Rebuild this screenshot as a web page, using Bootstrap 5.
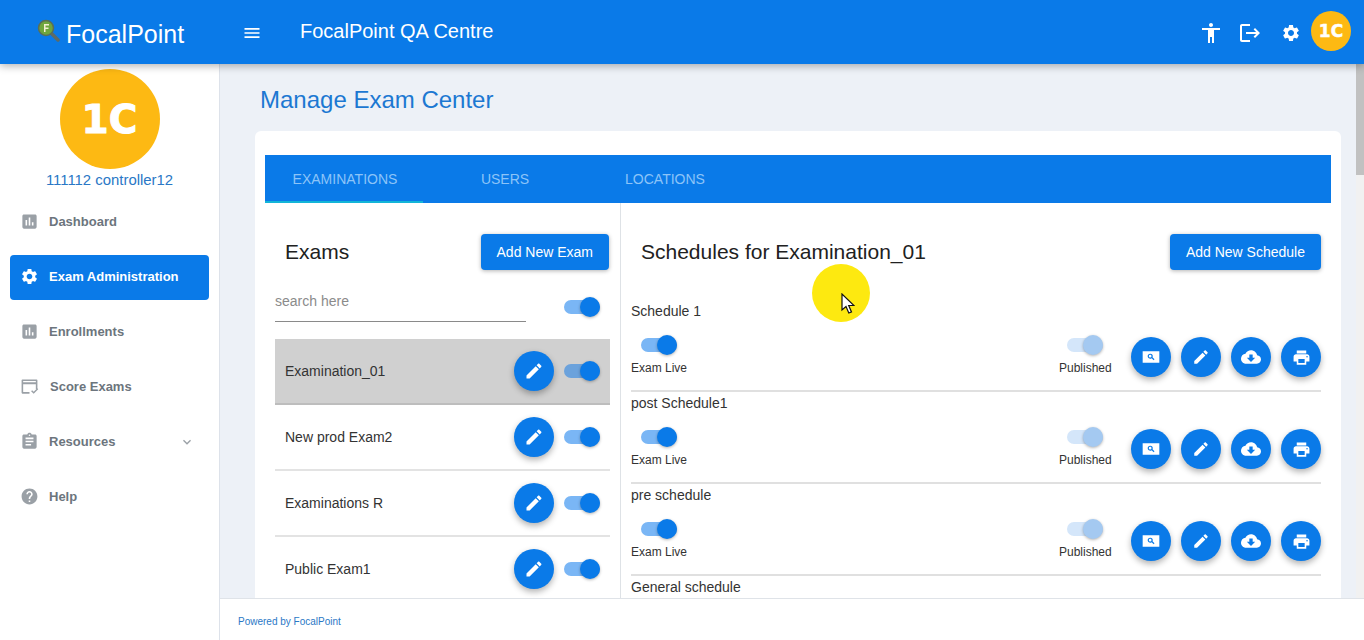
<!DOCTYPE html>
<html lang="en">
<head>
  <meta charset="UTF-8">
  <title>Manage Exam Center</title>
  <link href="https://cdn.jsdelivr.net/npm/bootstrap@5.3.3/dist/css/bootstrap.min.css" rel="stylesheet">
  <style>
    html, body { height: 100%; overflow: hidden; }
    body { font-family: "Liberation Sans", Arial, sans-serif; font-size: 14px; color: #333; background: #edf1f7; }
    .ic { fill: currentColor; display: block; flex: none; }
    .shrink-ok { min-height: 0; min-width: 0; }

    .app-shell { height: 640px; }
    .top-bar { height: 64px; background: #0a7ae8; color: #fff; box-shadow: 0 2px 8px rgba(0,0,0,.3); z-index: 5; padding: 0; flex: none; flex-wrap: nowrap; justify-content: flex-start; }
    .brand-box { width: 242px; padding-left: 37px; }
    .brand-logo { flex: none; margin-bottom: 3px; }
    .brand-name { font-size: 25px; line-height: 30px; margin-left: 6px; padding-top: 3px; }
    .menu-btn { margin-top: 2px; }
    .centre-name { font-size: 20px; margin-left: 38px; margin-bottom: 2px; }
    .top-icons { margin-left: auto; padding-right: 13px; }
    .top-icon { margin-top: 2px; }
    .top-icon.a1 { margin-right: 15px; }
    .top-icon.a2 { margin-right: 19px; }
    .mini-face { width: 40px; height: 40px; border-radius: 50%; background: #fdb913; font: bold 17px "DejaVu Sans", sans-serif; -webkit-text-stroke: .5px #fff; margin-left: 10px; margin-bottom: 2px; }

    .side-bar { width: 220px; flex: none; background: #fff; border-right: 1px solid #dde2ea; padding-top: 5px; }
    .big-face { width: 100px; height: 100px; border-radius: 50%; background: #fdb913; color: #fff; font: bold 39px "DejaVu Sans", sans-serif; -webkit-text-stroke: 1px #fff; }
    .user-name { color: #2a78c6; font-size: 14.9px; line-height: 20px; margin-top: 1px; margin-bottom: 10px; }
    .side-link { height: 45px; margin: 0 10px 10px; padding: 0 0 2px 10px; border-radius: 4px; color: #6c757d; font-size: 13px; font-weight: 700; gap: 10px; }
    .side-link .ic { color: #9aa0a6; }
    .side-link.on { background: #0a7ae8; color: #fff; }
    .side-link.on .ic { color: #fff; }
    .side-arrow { margin-left: auto; margin-right: 14px; }
    .score-lab { margin-left: 1px; }

    .page-scroll { min-height: 0; overflow: hidden; }
    .page-body { padding: 0 15px 0 35px; min-width: 0; }
    .page-title { color: #1c78d2; font-size: 24px; line-height: 30px; margin: 21px 0 16px 5px; font-weight: 400; }
    .rail { width: 8px; flex: none; background: #f1f1f1; }
    .rail-thumb { height: 111px; background: #c1c1c1; }
    .foot-bar { height: 42px; flex: none; background: #fff; border-top: 1px solid #dfe3e8; color: #2a78c6; font-size: 10px; padding: 4px 0 0 18px; z-index: 2; }

    .white-panel { background: #fff; border-radius: 6px; padding: 24px 10px 0; border: 0; min-height: 600px; }
    .tab-strip { height: 48px; background: #0a7ae8; flex-wrap: nowrap; }
    .tab-item { position: relative; width: 160px; height: 48px; color: #8cc4f8; font-size: 14px; }
    .tab-item.on::after { content: ""; position: absolute; left: 0; bottom: 0; width: 158px; height: 2px; background: #13b5d8; }

    .exam-col { width: 356px; flex: none; border-right: 1px solid #dee2e6; padding: 31px 10px 0; }
    .sched-col { flex: 1; min-width: 0; padding: 31px 10px 0; }
    .col-head { height: 36px; margin-bottom: 29px; }
    .col-head h5 { font-size: 21px; font-weight: 400; color: #212121; margin: 0 0 0 10px; }
    .exam-col .add-btn { margin-right: 1px; }
    .add-btn { background: #0a7ae8; color: #fff; border: 0; height: 36px; font-size: 14px; padding: 0 16px; border-radius: 4px; box-shadow: 0 1px 4px rgba(0,0,0,.3); }
    .search-row { height: 40px; padding-right: 10px; }
    .search-row .tog { margin-top: 1px; }
    .search-box { width: 251px; height: 22px; }
    .search-box .form-control { border: 0; border-bottom: 1px solid #8a8a8a; border-radius: 0; padding: 0 0 10px; height: 31px; font-size: 14px; box-shadow: none; margin-top: -8px; }
    .search-box .form-control::placeholder { color: #8b8b8b; }
    .exam-row { height: 66px; padding: 0 10px; border-bottom: 2px solid #e3e3e3; font-size: 14px; }
    .exam-row .fab-btn { margin-right: 10px; }
    .exam-row.picked { background: #d0d0d0; border-bottom-color: #bdbdbd; }

    .tog { display: block; position: relative; width: 36px; height: 14px; border-radius: 7px; background: #7ab6f5; flex: none; }
    .tog::after { content: ""; position: absolute; right: 0; top: -3px; width: 20px; height: 20px; border-radius: 50%; background: #0a7ae8; box-shadow: 0 1px 3px rgba(0,0,0,.3); }
    .tog.off { background: #d4e6fa; }
    .tog.off::after { background: #a4c9f1; }
    .picked .tog { background: #6ba2dc; }

    .fab-btn { width: 40px; height: 40px; border-radius: 50%; background: #0a7ae8; color: #fff; box-shadow: 0 3px 6px rgba(0,0,0,.3); flex: none; }
    .sched-row { height: 93px; margin-bottom: -1px; border-bottom: 2px solid #e0e0e0; }
    .sched-name { line-height: 24px; font-size: 14px; }
    .tog-stack { font-size: 12px; line-height: 16px; white-space: nowrap; }
    .tog-left { padding-top: 15px; }
    .tog-left .tog { margin: 0 0 8px 10px; }
    .tog-right { width: 52px; margin-right: 20px; padding-top: 15px; }
    .tog-right .tog { margin: 0 auto 8px; }
    .fab-set { padding-top: 14px; gap: 10px; }

    .spot { position: absolute; left: 812px; top: 264px; width: 58px; height: 58px; border-radius: 50%; background: #fde910; z-index: 8; }
    .spot svg { position: absolute; left: 29px; top: 29px; }
  </style>
</head>
<body>
  <svg width="0" height="0" class="position-absolute">
    <symbol id="i-menu" viewBox="0 0 24 24"><path d="M3 18h18v-2H3v2zm0-5h18v-2H3v2zm0-7v2h18V6H3z"/></symbol>
    <symbol id="i-access" viewBox="0 0 24 24"><path d="M12 2c1.100 0 2 .9 2 2s-.9 2-2 2-2-.9-2-2 .9-2 2-2zm9 7h-6v13h-2v-6h-2v6H9V9H3V7h18v2z"/></symbol>
    <symbol id="i-exit" viewBox="0 0 24 24"><path d="M17 7l-1.410 1.410L18.170 11H8v2h10.170l-2.580 2.580L17 17l5-5zM4 5h8V3H4c-1.100 0-2 .9-2 2v14c0 1.100.9 2 2 2h8v-2H4V5z"/></symbol>
    <symbol id="i-gear" viewBox="0 0 24 24"><path d="M19.140 12.940c.04-.3.06-.61.06-.94 0-.32-.02-.64-.07-.94l2.030-1.580c.18-.14.23-.41.12-.61l-1.920-3.320c-.12-.22-.37-.29-.59-.22l-2.390.96c-.5-.38-1.030-.7-1.620-.94l-.36-2.540c-.04-.24-.24-.41-.48-.41h-3.840c-.24 0-.43.17-.47.41l-.36 2.540c-.59.24-1.130.57-1.620.94l-2.390-.96c-.22-.08-.47 0-.59.22L2.740 8.870c-.12.21-.08.47.12.61l2.030 1.580c-.05.3-.09.63-.09.94s.02.64.07.94l-2.030 1.580c-.18.14-.23.41-.12.61l1.920 3.320c.12.22.37.29.59.22l2.390-.96c.5.38 1.030.7 1.620.94l.36 2.540c.05.24.24.41.48.41h3.840c.24 0 .44-.17.47-.41l.36-2.540c.59-.24 1.130-.56 1.620-.94l2.390.96c.22.08.47 0 .59-.22l1.920-3.320c.12-.22.07-.47-.12-.61l-2.010-1.580zM12 15.600c-1.980 0-3.600-1.620-3.600-3.600s1.620-3.600 3.600-3.600 3.600 1.620 3.600 3.600-1.620 3.600-3.600 3.600z"/></symbol>
    <symbol id="i-chart" viewBox="0 0 24 24"><path d="M19 3H5c-1.100 0-2 .9-2 2v14c0 1.100.9 2 2 2h14c1.100 0 2-.9 2-2V5c0-1.100-.9-2-2-2zM9 17H7v-7h2v7zm4 0h-2V7h2v10zm4 0h-2v-4h2v4z"/></symbol>
    <symbol id="i-card" viewBox="0 0 24 24"><path d="M3 3h18c.6 0 1 .4 1 1v11h-2V9H4v10h8v2H3c-.6 0-1-.4-1-1V4c0-.6.4-1 1-1zm1 2v1.500h16V5H4z"/><path d="M14 18l1.300-1.300 2 2 4.400-4.400L23 15.600 17.300 21.300z"/></symbol>
    <symbol id="i-clip" viewBox="0 0 24 24"><path d="M19 3h-4.180C14.400 1.840 13.300 1 12 1c-1.300 0-2.400.84-2.820 2H5c-1.100 0-2 .9-2 2v14c0 1.100.9 2 2 2h14c1.100 0 2-.9 2-2V5c0-1.100-.9-2-2-2zm-7 0c.55 0 1 .45 1 1s-.45 1-1 1-1-.45-1-1 .45-1 1-1zm2 14H7v-2h7v2zm3-4H7v-2h10v2zm0-4H7V7h10v2z"/></symbol>
    <symbol id="i-help" viewBox="0 0 24 24"><path d="M12 2C6.480 2 2 6.480 2 12s4.480 10 10 10 10-4.480 10-10S17.520 2 12 2zm1 17h-2v-2h2v2zm2.070-7.750l-.9.92C13.450 12.900 13 13.500 13 15h-2v-.5c0-1.100.45-2.100 1.170-2.830l1.240-1.260c.37-.36.59-.86.59-1.410 0-1.100-.9-2-2-2s-2 .9-2 2H8c0-2.210 1.790-4 4-4s4 1.790 4 4c0 .88-.36 1.680-.93 2.250z"/></symbol>
    <symbol id="i-down" viewBox="0 0 24 24"><path d="M16.590 8.590L12 13.170 7.410 8.590 6 10l6 6 6-6z"/></symbol>
    <symbol id="i-edit" viewBox="0 0 24 24"><path d="M3 17.250V21h3.750L17.810 9.940l-3.750-3.750L3 17.250zM20.710 7.040c.39-.39.39-1.020 0-1.410l-2.340-2.340c-.39-.39-1.020-.39-1.410 0l-1.830 1.830 3.750 3.750 1.830-1.830z"/></symbol>
    <symbol id="i-cloud" viewBox="0 0 24 24"><path d="M19.350 10.040C18.670 6.590 15.640 4 12 4 9.110 4 6.600 5.640 5.350 8.040 2.340 8.360 0 10.910 0 14c0 3.310 2.690 6 6 6h13c2.760 0 5-2.240 5-5 0-2.640-2.050-4.780-4.650-4.960zM17 13l-5 5-5-5h3V9h4v4h3z"/></symbol>
    <symbol id="i-print" viewBox="0 0 24 24"><path d="M19 8H5c-1.660 0-3 1.340-3 3v6h4v4h12v-4h4v-6c0-1.660-1.340-3-3-3zm-3 11H8v-5h8v5zm3-7c-.55 0-1-.45-1-1s.45-1 1-1 1 .45 1 1-.45 1-1 1zm-1-9H6v4h12V3z"/></symbol>
    <symbol id="i-find" viewBox="0 0 24 24"><path fill-rule="evenodd" d="M2 5h20v14H2zM11 8a3 3 0 1 0 1.800 5.400l2.400 2.400 1-1-2.400-2.400A3 3 0 0 0 11 8zm0 1.400a1.600 1.600 0 1 1 0 3.200 1.600 1.600 0 0 1 0-3.200z"/></symbol>
  </svg>

  <div class="app-shell d-flex flex-column">
    <nav class="navbar top-bar">
      <div class="brand-box d-flex align-items-center">
        <svg width="23" height="24" viewBox="0 0 23 24" class="brand-logo">
          <path d="M13 13l8 8" stroke="#5d6b66" stroke-width="3.500" stroke-linecap="round"/>
          <circle cx="9" cy="9" r="7.500" fill="#6fa63c" stroke="#5a6f55" stroke-width="1.500"/>
          <path d="M7 5h5v1.500H8.500V8.500H11.500V10H8.500v3H7z" fill="#f3efd0"/>
        </svg>
        <span class="brand-name">FocalPoint</span>
      </div>
      <svg class="ic menu-btn" width="20" height="20"><use href="#i-menu"/></svg>
      <span class="centre-name">FocalPoint QA Centre</span>
      <div class="top-icons d-flex align-items-center">
        <svg class="ic top-icon a1" width="24" height="24"><use href="#i-access"/></svg>
        <svg class="ic top-icon a2" width="24" height="24"><use href="#i-exit"/></svg>
        <svg class="ic top-icon" width="20" height="20"><use href="#i-gear"/></svg>
        <div class="mini-face d-flex align-items-center justify-content-center">1C</div>
      </div>
    </nav>

    <div class="d-flex flex-grow-1 shrink-ok">
      <aside class="side-bar">
        <div class="big-face d-flex align-items-center justify-content-center mx-auto">1C</div>
        <div class="user-name text-center">111112 controller12</div>
        <div class="side-link d-flex align-items-center"><svg class="ic" width="19" height="19"><use href="#i-chart"/></svg>Dashboard</div>
        <div class="side-link on d-flex align-items-center"><svg class="ic" width="19" height="19"><use href="#i-gear"/></svg>Exam Administration</div>
        <div class="side-link d-flex align-items-center"><svg class="ic" width="19" height="19"><use href="#i-chart"/></svg>Enrollments</div>
        <div class="side-link d-flex align-items-center"><svg class="ic" width="19" height="19"><use href="#i-card"/></svg><span class="score-lab">Score Exams</span></div>
        <div class="side-link d-flex align-items-center"><svg class="ic" width="19" height="19"><use href="#i-clip"/></svg>Resources<svg class="ic side-arrow" width="16" height="16"><use href="#i-down"/></svg></div>
        <div class="side-link d-flex align-items-center"><svg class="ic" width="19" height="19"><use href="#i-help"/></svg>Help</div>
      </aside>

      <div class="d-flex flex-column flex-grow-1 shrink-ok">
        <div class="page-scroll d-flex flex-grow-1">
          <main class="page-body flex-grow-1">
            <h4 class="page-title">Manage Exam Center</h4>
            <div class="card white-panel">
              <ul class="nav tab-strip">
                <li class="tab-item on d-flex align-items-center justify-content-center">EXAMINATIONS</li>
                <li class="tab-item d-flex align-items-center justify-content-center">USERS</li>
                <li class="tab-item d-flex align-items-center justify-content-center">LOCATIONS</li>
              </ul>
              <div class="d-flex">
                <section class="exam-col">
                  <div class="col-head d-flex align-items-center justify-content-between">
                    <h5>Exams</h5>
                    <button class="btn add-btn">Add New Exam</button>
                  </div>
                  <div class="search-row d-flex justify-content-between">
                    <div class="search-box"><input class="form-control" placeholder="search here"></div>
                    <span class="tog"></span>
                  </div>
                  <div id="exams"></div>
                </section>

                <section class="sched-col">
                  <div class="col-head d-flex align-items-center justify-content-between">
                    <h5>Schedules for Examination_01</h5>
                    <button class="btn add-btn">Add New Schedule</button>
                  </div>
                  <div id="schedules"></div>
                </section>
              </div>
            </div>
          </main>
          <div class="rail"><div class="rail-thumb"></div></div>
        </div>
        <footer class="foot-bar d-flex align-items-center">Powered by FocalPoint</footer>
      </div>
    </div>
  </div>

  <div class="spot">
    <svg width="14" height="22" viewBox="0 0 14 22"><path d="M1 1v16l4-3.500 2.800 6.500 2.700-1.100-2.800-6.400H13z" fill="#fff" stroke="#111" stroke-width="1.200"/></svg>
  </div>

  <script>
    const exams = ['Examination_01', 'New prod Exam2', 'Examinations R', 'Public Exam1'];
    document.getElementById('exams').innerHTML = exams.map((name, i) => `
      <div class="exam-row ${i === 0 ? 'picked' : ''} d-flex align-items-center">
        <span class="flex-grow-1">${name}</span>
        <span class="fab-btn d-flex align-items-center justify-content-center"><svg class="ic" width="20" height="20"><use href="#i-edit"/></svg></span>
        <span class="tog"></span>
      </div>`).join('');

    const schedules = ['Schedule 1', 'post Schedule1', 'pre schedule'];
    const fabIcons = [['i-find', 20], ['i-edit', 18], ['i-cloud', 20], ['i-print', 19]];
    const fabs = fabIcons.map(f => `<span class="fab-btn d-flex align-items-center justify-content-center"><svg class="ic" width="${f[1]}" height="${f[1]}"><use href="#${f[0]}"/></svg></span>`).join('');
    // the fourth schedule is cut off by the footer, only its name shows
    document.getElementById('schedules').innerHTML = schedules.map(name => `
      <div class="sched-row">
        <div class="sched-name">${name}</div>
        <div class="d-flex">
          <div class="tog-stack tog-left flex-grow-1"><span class="tog"></span>Exam Live</div>
          <div class="tog-stack tog-right text-center"><span class="tog off"></span>Published</div>
          <div class="fab-set d-flex">${fabs}</div>
        </div>
      </div>`).join('') + '<div class="sched-name">General schedule</div>';
  </script>
  <script src="https://cdn.jsdelivr.net/npm/bootstrap@5.3.3/dist/js/bootstrap.bundle.min.js"></script>
</body>
</html>
